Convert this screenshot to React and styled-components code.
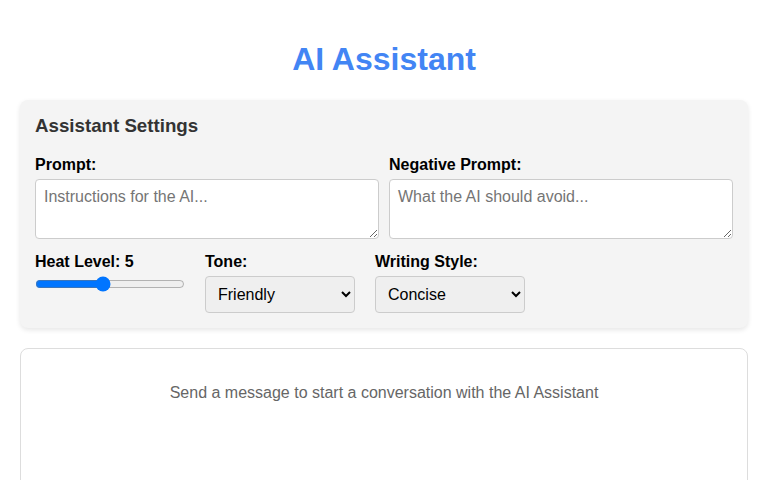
import React, { useState } from "react";
import styled, { createGlobalStyle } from "styled-components";

const GlobalStyle = createGlobalStyle`
  body {
    margin: 0;
    padding: 20px;
    font-family: "Liberation Sans", Arial, sans-serif;
    background: #fff;
    color: #000;
  }
  * {
    box-sizing: border-box;
  }
`;

const App = () => {
  const [prompt, setPrompt] = useState("");
  const [negative, setNegative] = useState("");
  const [heat, setHeat] = useState(5);
  const [tone, setTone] = useState("friendly");
  const [style, setStyle] = useState("concise");

  return (
    <>
      <GlobalStyle />
      <Title>AI Assistant</Title>
      <Settings>
        <SettingsTitle>Assistant Settings</SettingsTitle>
        <PromptRow>
          <Field>
            <Label>Prompt:</Label>
            <TextArea
              placeholder="Instructions for the AI..."
              value={prompt}
              onChange={(e) => setPrompt(e.target.value)}
            />
          </Field>
          <Field>
            <Label>Negative Prompt:</Label>
            <TextArea
              placeholder="What the AI should avoid..."
              value={negative}
              onChange={(e) => setNegative(e.target.value)}
            />
          </Field>
        </PromptRow>
        <OptionsRow>
          <Option>
            <Label>Heat Level: {heat}</Label>
            <Slider
              type="range"
              min="1"
              max="10"
              value={heat}
              onChange={(e) => setHeat(Number(e.target.value))}
            />
          </Option>
          <Option>
            <Label>Tone:</Label>
            <Select value={tone} onChange={(e) => setTone(e.target.value)}>
              <option value="friendly">Friendly</option>
              <option value="professional">Professional</option>
              <option value="casual">Casual</option>
            </Select>
          </Option>
          <Option>
            <Label>Writing Style:</Label>
            <Select value={style} onChange={(e) => setStyle(e.target.value)}>
              <option value="concise">Concise</option>
              <option value="detailed">Detailed</option>
              <option value="creative">Creative</option>
            </Select>
          </Option>
        </OptionsRow>
      </Settings>
      <Chat>
        <Empty>Send a message to start a conversation with the AI Assistant</Empty>
      </Chat>
    </>
  );
};

export default App;

const Title = styled.h1`
  text-align: center;
  color: #4285f4;
  font-size: 32px;
  margin: 21px 0 22px;
`;

const Settings = styled.div`
  background: #f4f4f4;
  border-radius: 8px;
  padding: 15px;
  box-shadow: 0 2px 5px rgba(0, 0, 0, 0.1);
  margin-bottom: 20px;
`;

const SettingsTitle = styled.h3`
  margin: 0 0 19px;
  font-size: 18.72px;
  color: #333;
`;

const PromptRow = styled.div`
  display: flex;
  gap: 10px;
  margin-bottom: 14px;
`;

const Field = styled.div`
  flex: 1;
  display: flex;
  flex-direction: column;
`;

const Label = styled.label`
  display: block;
  font-weight: bold;
  font-size: 16px;
  margin-bottom: 5px;
`;

const TextArea = styled.textarea`
  height: 60px;
  padding: 8px;
  border: 1px solid #ccc;
  border-radius: 4px;
  font-family: inherit;
  font-size: 16px;
  resize: vertical;
  &::placeholder {
    color: #757575;
  }
`;

const OptionsRow = styled.div`
  display: flex;
  gap: 20px;
`;

const Option = styled.div`
  width: 150px;
  display: flex;
  flex-direction: column;
`;

const Slider = styled.input`
  width: 150px;
  margin: 0;
`;

const Select = styled.select`
  width: 150px;
  padding: 8px;
  border: 1px solid #ccc;
  border-radius: 4px;
  font-family: inherit;
  font-size: 16px;
  background: #efefef;
  color: #000;
`;

const Chat = styled.div`
  background: #fff;
  border: 1px solid #ddd;
  border-radius: 8px;
  height: 400px;
  padding: 15px;
`;

const Empty = styled.div`
  text-align: center;
  color: #666;
  font-size: 16px;
  padding: 20px 0;
`;
